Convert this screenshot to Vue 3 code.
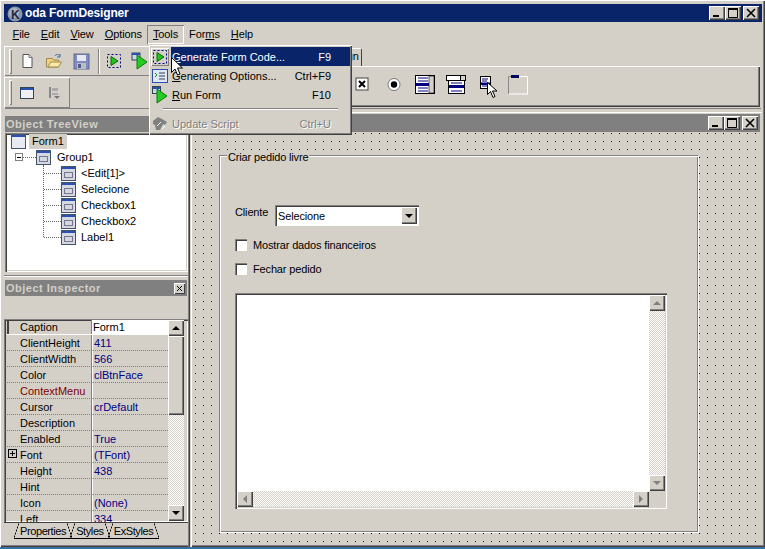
<script setup>
const menus = [
  { key: 'F', rest: 'ile' },
  { key: 'E', rest: 'dit' },
  { key: 'V', rest: 'iew' },
  { key: 'O', rest: 'ptions' },
  { key: 'T', rest: 'ools', open: true },
  { pre: 'For', key: 'm', rest: 's' },
  { key: 'H', rest: 'elp' }
]

const treeChildren = ['<Edit[1]>', 'Selecione', 'Checkbox1', 'Checkbox2', 'Label1']

const props = [
  { name: 'Caption', value: 'Form1', selected: true },
  { name: 'ClientHeight', value: '411' },
  { name: 'ClientWidth', value: '566' },
  { name: 'Color', value: 'clBtnFace' },
  { name: 'ContextMenu', value: '', event: true },
  { name: 'Cursor', value: 'crDefault' },
  { name: 'Description', value: '' },
  { name: 'Enabled', value: 'True' },
  { name: 'Font', value: '(TFont)', expand: true },
  { name: 'Height', value: '438' },
  { name: 'Hint', value: '' },
  { name: 'Icon', value: '(None)' },
  { name: 'Left', value: '334' }
]

const dots = "url(\"data:image/svg+xml,%3Csvg xmlns='http://www.w3.org/2000/svg' width='8' height='8'%3E%3Crect width='1' height='1' fill='%23000'/%3E%3C/svg%3E\")"
</script>

<template>
  <div class="desktop">
    <div class="window">
      <div class="titlebar">
        <svg class="app-icon" width="16" height="16" viewBox="0 0 16 16">
          <circle cx="8" cy="8" r="7.500" fill="#8a95a8" />
          <circle cx="7" cy="7" r="5" fill="#aab2c0" />
          <text x="4" y="12.500" font-size="12" font-weight="700" fill="#1c2a48" font-family="Liberation Sans, sans-serif">K</text>
        </svg>
        <span class="title-text">oda FormDesigner</span>
        <div class="win-btns">
          <span class="win-btn"><svg width="16" height="14" viewBox="0 0 16 14"><rect x="4" y="9" width="6" height="2" fill="#000" /></svg></span>
          <span class="win-btn"><svg width="16" height="14" viewBox="0 0 16 14"><path d="M3.500 2.500h9v9h-9z" fill="none" stroke="#000" /><rect x="3" y="2" width="10" height="2" fill="#000" /></svg></span>
          <span class="win-btn gap"><svg width="16" height="14" viewBox="0 0 16 14"><path d="M4 3l8 8M12 3l-8 8" stroke="#000" stroke-width="1.600" /></svg></span>
        </div>
      </div>

      <div class="menubar">
        <span v-for="m in menus" :key="m.key" class="menu-item" :class="{ open: m.open }">{{ m.pre }}<u>{{ m.key }}</u>{{ m.rest }}</span>
      </div>

      <div class="toolbars">
        <div class="toolbar-stack">
          <div class="toolbar first">
            <i class="grip"></i>
            <span class="tool">
              <svg width="18" height="18" viewBox="0 0 18 18"><path d="M5 2.500h6l3 3v10H5z" fill="#fff" stroke="#555" /><path d="M11 2.500v3h3" fill="#ddd" stroke="#777" /></svg>
            </span>
            <span class="tool">
              <svg width="18" height="18" viewBox="0 0 18 18"><path d="M1.500 6.500h6l1 1.500h5v7h-12z" fill="#f3d27a" stroke="#a08a50" /><path d="M3 15l2.500-5h11l-3 5z" fill="#fbe9a8" stroke="#a08a50" /><path d="M10 4c1-2 4-2 5 0" fill="none" stroke="#3a6ca8" /><path d="M15 2v3h-3" fill="none" stroke="#3a6ca8" /></svg>
            </span>
            <span class="tool">
              <svg width="18" height="18" viewBox="0 0 18 18"><rect x="2" y="2" width="15" height="15" fill="#7f8cc0" stroke="#606a98" /><rect x="5" y="3" width="9" height="6" fill="#e8e8ee" /><rect x="5" y="11" width="9" height="6" fill="#b8bcc8" /><rect x="6" y="12" width="3" height="4" fill="#555c80" /></svg>
            </span>
            <i class="sep"></i>
            <span class="tool narrow">
              <svg width="18" height="18" viewBox="0 0 18 18"><rect x="2.500" y="2.500" width="13" height="13" fill="none" stroke="#000080" stroke-dasharray="2 2" /><path d="M6 4.500l7 4.500-7 4.500z" fill="#1fc51f" stroke="#0a6a0a" /></svg>
            </span>
            <span class="tool narrow">
              <svg width="18" height="18" viewBox="0 0 18 18"><rect x="1" y="1" width="8" height="7" fill="#c8d4f0" stroke="#345" /><rect x="1" y="1" width="8" height="2" fill="#2a50b0" /><path d="M6 3l10 7-10 7z" fill="#22cc22" stroke="#0a7a0a" /></svg>
            </span>
          </div>
          <div class="toolbar second">
            <i class="grip"></i>
            <span class="tool">
              <svg width="18" height="18" viewBox="0 0 18 18"><rect x="2.500" y="3.500" width="13" height="11" fill="#eef0f6" stroke="#345" /><rect x="3" y="4" width="12" height="2" fill="#2a50b0" /></svg>
            </span>
            <span class="tool">
              <svg width="18" height="18" viewBox="0 0 18 18"><path d="M5 3v11" stroke="#888" stroke-width="2" /><path d="M7 4h6v3H7zM7 9h6v2H7z" fill="#aaa" /><path d="M9 12h6l-3 3z" fill="#777" /></svg>
            </span>
          </div>
        </div>

        <div class="palette">
          <div class="palette-tabs"><span class="palette-tab">Design</span></div>
          <div class="palette-panel">
            <span class="pal">
              <svg width="18" height="18" viewBox="0 0 18 18"><rect x="2" y="2" width="12" height="12" fill="#fff" stroke="#444" /><path d="M5 5l6 6M11 5l-6 6" stroke="#000" stroke-width="2" /></svg>
            </span>
            <span class="pal">
              <svg width="18" height="18" viewBox="0 0 18 18"><circle cx="9" cy="8.500" r="6" fill="#fff" stroke="#777" /><circle cx="9" cy="8.500" r="3.200" fill="#000" /></svg>
            </span>
            <span class="pal">
              <svg width="20" height="20" viewBox="0 0 20 20"><rect x=".5" y=".5" width="19" height="18" fill="#fff" stroke="#000" /><path d="M3 3h10M3 6h10M3 13h10M3 16h10" stroke="#000080" /><rect x="1" y="8" width="13" height="3" fill="#000080" /><rect x="14" y="1" width="5" height="17" fill="#d4d0c8" stroke="#000" stroke-width=".6" /></svg>
            </span>
            <span class="pal">
              <svg width="20" height="20" viewBox="0 0 20 20"><rect x=".5" y=".5" width="19" height="5" fill="#fff" stroke="#000" /><rect x="14.500" y=".5" width="5" height="5" fill="#d4d0c8" stroke="#000" /><rect x="2.500" y="5.500" width="16" height="13" fill="#fff" stroke="#000" /><path d="M5 8h11M5 16h11" stroke="#000080" /><rect x="3" y="10" width="15" height="3" fill="#000080" /></svg>
            </span>
            <span class="pal">
              <svg width="14" height="18" viewBox="0 0 14 18"><rect x=".5" y=".5" width="10" height="12" fill="#fff" stroke="#000" /><path d="M2 3h6M2 5h5M2 10h6" stroke="#000080" /><rect x="1" y="6.500" width="9" height="2.500" fill="#000080" /></svg>
            </span>
            <span class="pal">
              <svg width="20" height="20" viewBox="0 0 20 20"><path d="M.5 19V1.500h19V19z" fill="#d4d0c8" stroke="#fff" /><path d="M.5 19V1.500h3" fill="none" stroke="#888" /><rect x="3" y="0" width="8" height="3" fill="#000060" /></svg>
            </span>
          </div>
        </div>
      </div>

      <div class="workspace">
        <aside class="side">
          <div class="panel tree-panel">
            <div class="caption">Object TreeView</div>
            <div class="tree sunken">
              <div class="tree-row root">
                <svg class="node" width="15" height="15" viewBox="0 0 15 15"><rect x=".5" y=".5" width="14" height="14" fill="#e8eaf2" stroke="#456" /><rect x="1" y="1" width="13" height="2" fill="#2a50b0" /></svg>
                <span class="tree-label selected">Form1</span>
              </div>
              <div class="tree-row group-row">
                <span class="expander"></span>
                <i class="dash"></i>
                <svg class="node" width="15" height="15" viewBox="0 0 15 15"><rect x=".5" y=".5" width="14" height="14" fill="#d4d8e4" stroke="#456" /><rect x="1" y="1" width="13" height="2" fill="#2a50b0" /><rect x="3.500" y="6.500" width="8" height="5" fill="none" stroke="#778" /></svg>
                <span class="tree-label">Group1</span>
              </div>
              <div class="tree-children">
                <div v-for="c in treeChildren" :key="c" class="tree-row">
                  <i class="dash long"></i>
                  <svg class="node" width="15" height="15" viewBox="0 0 15 15"><rect x=".5" y=".5" width="14" height="14" fill="#d4d8e4" stroke="#456" /><rect x="1" y="1" width="13" height="2" fill="#2a50b0" /><rect x="3.500" y="6.500" width="8" height="5" fill="none" stroke="#778" /></svg>
                  <span class="tree-label">{{ c }}</span>
                </div>
              </div>
            </div>
          </div>

          <div class="panel inspector">
            <div class="caption">Object Inspector<span class="cap-close"><svg width="11" height="11" viewBox="0 0 11 11"><path d="M3 3l5 5M8 3l-5 5" stroke="#000" /></svg></span></div>
            <div class="grid-wrap sunken">
              <div class="prop-list">
                <div v-for="p in props" :key="p.name" class="prop" :class="{ selected: p.selected }">
                  <span class="prop-name" :class="{ event: p.event }">
                    <span v-if="p.expand" class="plus"></span>{{ p.name }}
                  </span>
                  <span class="prop-value">{{ p.value }}</span>
                </div>
              </div>
              <div class="vscroll">
                <span class="sb-btn"><i class="arrow up"></i></span>
                <span class="thumb"></span>
                <span class="track"></span>
                <span class="sb-btn"><i class="arrow down"></i></span>
              </div>
            </div>
            <div class="tabs">
              <span class="tab active">Properties</span>
              <span class="tab">Styles</span>
              <span class="tab">ExStyles</span>
            </div>
          </div>
        </aside>

        <main class="mdi">
          <div class="mdi-caption">
            <div class="win-btns">
              <span class="win-btn"><svg width="16" height="14" viewBox="0 0 16 14"><rect x="4" y="9" width="6" height="2" fill="#000" /></svg></span>
              <span class="win-btn"><svg width="16" height="14" viewBox="0 0 16 14"><path d="M3.500 2.500h9v9h-9z" fill="none" stroke="#000" /><rect x="3" y="2" width="10" height="2" fill="#000" /></svg></span>
              <span class="win-btn gap"><svg width="16" height="14" viewBox="0 0 16 14"><path d="M4 3l8 8M12 3l-8 8" stroke="#000" stroke-width="1.600" /></svg></span>
            </div>
          </div>
          <div class="canvas" :style="{ backgroundImage: dots }">
            <div class="groupbox">
              <span class="group-title">Criar pedido livre</span>
              <div class="client-row">
                <label class="client-label">Cliente</label>
                <div class="combo">
                  <span>Selecione</span>
                  <span class="sb-btn combo-btn"><i class="arrow down"></i></span>
                </div>
              </div>
              <div class="check-row"><span class="check"></span>Mostrar dados financeiros</div>
              <div class="check-row"><span class="check"></span>Fechar pedido</div>
              <div class="memo">
                <div class="memo-text"></div>
                <div class="memo-v">
                  <span class="sb-btn"><i class="arrow up off"></i></span>
                  <span class="track"></span>
                  <span class="sb-btn"><i class="arrow down off"></i></span>
                </div>
                <div class="memo-h">
                  <span class="sb-btn"><i class="arrow left off"></i></span>
                  <span class="track"></span>
                  <span class="sb-btn"><i class="arrow right off"></i></span>
                </div>
                <div class="memo-corner"></div>
              </div>
            </div>
          </div>
        </main>
      </div>

      <!-- open Tools menu -->
      <div class="popup">
        <div class="pop-row active">
          <span class="pop-icon raised">
            <svg width="16" height="16" viewBox="0 0 16 16"><rect x="1.500" y="1.500" width="13" height="13" fill="none" stroke="#000080" stroke-dasharray="2 2" /><path d="M5 3.500l7 4.500-7 4.500z" fill="#1fc51f" stroke="#0a6a0a" /></svg>
          </span>
          <span class="pop-label"><u>G</u>enerate Form Code...<em>F9</em></span>
        </div>
        <div class="pop-row">
          <span class="pop-icon">
            <svg width="16" height="14" viewBox="0 0 16 14"><rect x=".5" y=".5" width="15" height="13" fill="#dfe6f6" stroke="#2a50b0" /><path d="M3 4l2 2-2 2" fill="none" stroke="#1a8a1a" /><path d="M7 4h6M7 7h6M7 10h6" stroke="#345" /></svg>
          </span>
          <span class="pop-label"><u>G</u>enerating Options...<em>Ctrl+F9</em></span>
        </div>
        <div class="pop-row">
          <span class="pop-icon">
            <svg width="16" height="18" viewBox="0 0 16 18"><rect x=".5" y=".5" width="8" height="7" fill="#c8d4f0" stroke="#345" /><rect x="1" y="1" width="7" height="2" fill="#2a50b0" /><path d="M5 3l10 7-10 7z" fill="#22cc22" stroke="#0a7a0a" /></svg>
          </span>
          <span class="pop-label"><u>R</u>un Form<em>F10</em></span>
        </div>
        <div class="pop-sep"></div>
        <div class="pop-row disabled">
          <span class="pop-icon">
            <svg width="16" height="16" viewBox="0 0 16 16"><path d="M1 5l5-4 4 2 5 3-2 3-2-1-3 6H4L3 9 1 8z" fill="#808080" /><path d="M5 10l4-4M10 13l3-3" stroke="#fff" /></svg>
          </span>
          <span class="pop-label">Update Script<em>Ctrl+U</em></span>
        </div>
      </div>

      <svg class="cursor menu-cursor" width="12" height="20" viewBox="0 0 12 20"><path d="M.5.500v15l3.500-3.500 2.500 6 2.500-1-2.500-6h5z" fill="#fff" stroke="#000" /></svg>
      <svg class="cursor pal-cursor" width="12" height="20" viewBox="0 0 12 20"><path d="M.5.500v12l3-3 2.500 6 2-1-2.500-5.500h4.500z" fill="#fff" stroke="#000" /></svg>
    </div>
  </div>
</template>

<style>
html, body { margin: 0; padding: 0; background: #3a6ea5; }
</style>

<style scoped>
* { box-sizing: border-box; }

.desktop {
  width: 765px;
  height: 549px;
  overflow: hidden;
  background: #3a6ea5;
  font-family: "Liberation Sans", sans-serif;
  font-size: 11px;
  color: #000;
}

.window {
  position: relative;
  height: 547px;
  padding: 4px 3px 0 4px;
  background: #d4d0c8;
  box-shadow: inset 1px 1px #fff, inset -1px -1px #404040, inset -2px -2px #808080;
  display: flex;
  flex-direction: column;
}

.titlebar {
  height: 18px;
  background: #0a246a;
  display: flex;
  align-items: center;
  padding: 0 3px 0 3px;
  flex: none;
}

.app-icon { margin-top: 1px; }

.title-text {
  margin-left: 2px;
  color: #fff;
  font-size: 12px;
  font-weight: 700;
  letter-spacing: -.15px;
}

.win-btns { margin-left: auto; display: flex; }

.win-btn {
  width: 16px;
  height: 14px;
  background: #d4d0c8;
  box-shadow: inset 1px 1px #fff, inset -1px -1px #404040, inset -2px -2px #808080;
  display: block;
}

.win-btn svg { display: block; }
.win-btn.gap { margin-left: 2px; }

.menubar {
  height: 24px;
  display: flex;
  align-items: center;
  padding: 1px 0 0 3px;
  flex: none;
}

.menu-item {
  padding: 0 5.5px;
  height: 19px;
  line-height: 19px;
  letter-spacing: -.1px;
}

.menu-item.open {
  box-shadow: inset 1px 1px #808080, inset -1px -1px #fff;
}

.toolbars {
  height: 62px;
  flex: none;
  display: flex;
  box-shadow: 0 2px 0 -1px #808080;
}

.toolbar-stack { width: 161px; flex: none; }

.toolbar {
  display: flex;
  align-items: center;
  padding-left: 5px;
  box-shadow: inset 1px 1px #fff, inset -1px -1px #808080;
}

.toolbar.first { height: 30px; width: 161px; }
.toolbar.second { height: 31px; width: 66px; margin-top: 1px; }

.grip {
  width: 3px;
  height: 25px;
  margin-right: 1px;
  box-shadow: inset 1px 1px #fff, inset -1px -1px #808080;
  flex: none;
}

.tool {
  width: 27px;
  height: 24px;
  display: flex;
  align-items: center;
  justify-content: center;
  flex: none;
}

.tool.narrow { width: 26px; }

.sep {
  width: 2px;
  height: 25px;
  margin: 0 1px 0 4px;
  box-shadow: inset 1px 0 #808080, inset -1px 0 #fff;
  flex: none;
}

.palette { flex: 1; display: flex; flex-direction: column; margin-right: 2px; }

.palette-tabs { height: 20px; display: flex; padding: 2px 0 0 140px; }

.palette-tab {
  width: 57px;
  height: 18px;
  line-height: 16px;
  text-align: right;
  padding-right: 3px;
  border-radius: 2px 2px 0 0;
  box-shadow: inset 1px 1px #fff, inset -1px 0 #404040;
}

.palette-panel {
  height: 41px;
  display: flex;
  align-items: center;
  padding: 0 0 3px 182px;
  box-shadow: inset 1px 1px #fff, inset -1px -1px #404040, inset -2px -2px #808080;
}

.pal {
  width: 31px;
  height: 24px;
  display: flex;
  align-items: center;
  justify-content: center;
  flex: none;
}

.workspace {
  flex: 1;
  min-height: 0;
  display: flex;
  margin-top: 4px;
}

.side {
  width: 184px;
  flex: none;
  display: flex;
  flex-direction: column;
  padding-top: 4px;
  box-shadow: 1px 0 0 #808080, 2px 0 0 #404040, 3px 0 0 #d4d0c8;
}

.panel { display: flex; flex-direction: column; }
.tree-panel { height: 160px; border-bottom: 1px solid #808080; box-shadow: 0 1px 0 #fff; }
.inspector { flex: 1; margin-top: 4px; min-height: 0; }

.caption {
  height: 16px;
  flex: none;
  margin: 0 1px 0 1px;
  background: #808080;
  color: #d4d0c8;
  font-weight: 700;
  font-size: 11px;
  letter-spacing: .5px;
  line-height: 16px;
  padding-left: 1px;
  display: flex;
  align-items: center;
}

.cap-close {
  width: 11px;
  height: 11px;
  margin-left: auto;
  margin-right: 2px;
  background: #d4d0c8;
  box-shadow: inset 1px 1px #fff, inset -1px -1px #404040;
}

.cap-close svg { display: block; }

.sunken {
  box-shadow: inset 1px 1px #808080, inset 2px 2px #404040, inset -1px -1px #fff, inset -2px -2px #d4d0c8;
}

.tree {
  height: 139px;
  margin: 1px 0 0 1px;
  background: #fff;
  padding: 0 0 0 6px;
}

.tree-row {
  height: 16px;
  display: flex;
  align-items: center;
}

.node { flex: none; }

.tree-label { margin-left: 4px; padding: 0 2px; line-height: 15px; }
.tree-children .tree-label { margin-left: 3px; padding: 0 2px; }
.tree-label.selected { background: #d4d0c8; margin-left: 3px; padding: 0 3px; }

.group-row { padding-left: 4px; }

.expander {
  width: 8px;
  height: 8px;
  border: 1px solid #808080;
  background: linear-gradient(#000, #000) center / 4px 1px no-repeat #fff;
  flex: none;
}

.dash {
  width: 13px;
  border-bottom: 1px dotted #666;
  flex: none;
}

.dash.long { width: 17px; }

.tree-children {
  margin-left: 32px;
  height: 72px;
  border-left: 1px dotted #666;
}

.inspector .sunken { height: 203px; margin-top: 23px; }

.grid-wrap {
  display: flex;
  padding: 1px 2px 0 3px;
  overflow: hidden;
  flex: none;
}

.prop-list { width: 161px; flex: none; height: 202px; overflow: hidden; }

.prop {
  height: 16px;
  display: flex;
  border-bottom: 1px dotted #808080;
  line-height: 16px;
}

.prop-name {
  width: 84px;
  padding-left: 13px;
  position: relative;
  flex: none;
  box-shadow: 1px 0 0 #808080, 2px 0 0 #fff;
}

.prop-name.event { color: #800000; }

.prop-value {
  padding-left: 1px;
  margin-left: 2px;
  color: #000080;
  flex: 1;
}

.prop.selected { height: 15px; line-height: 14px; border-bottom: 1px solid #fff; }
.prop.selected .prop-name { box-shadow: inset 2px 0 #404040, 1px 0 0 #808080, 2px 0 0 #fff; }
.prop.selected .prop-value { background: #fff; color: #000; padding-left: 0; }

.plus {
  position: absolute;
  left: 1px;
  top: 2px;
  width: 9px;
  height: 9px;
  border: 1px solid #000;
  background:
    linear-gradient(#000, #000) center / 5px 1px no-repeat,
    linear-gradient(#000, #000) center / 1px 5px no-repeat;
}

.vscroll {
  width: 16px;
  flex: none;
  display: flex;
  flex-direction: column;
  height: 201px;
}

.sb-btn {
  width: 16px;
  height: 16px;
  flex: none;
  background: #d4d0c8;
  box-shadow: inset 1px 1px #fff, inset -1px -1px #404040, inset -2px -2px #808080;
  display: flex;
  align-items: center;
  justify-content: center;
}

.thumb {
  height: 79px;
  flex: none;
  background: #d4d0c8;
  box-shadow: inset 1px 1px #fff, inset -1px -1px #404040, inset -2px -2px #808080;
}

.track {
  flex: 1;
  background: repeating-conic-gradient(#d4d0c8 0 25%, #fff 0 50%) 0 0 / 2px 2px;
}

.arrow { width: 0; height: 0; border: 4px solid transparent; display: block; }
.arrow.up { border-bottom-color: #000; border-top-width: 0; }
.arrow.down { border-top-color: #000; border-bottom-width: 0; }
.arrow.left { border-right-color: #000; border-left-width: 0; }
.arrow.right { border-left-color: #000; border-right-width: 0; }
.arrow.up.off { border-bottom-color: #808080; }
.arrow.down.off { border-top-color: #808080; }
.arrow.left.off { border-right-color: #808080; }
.arrow.right.off { border-left-color: #808080; }

.tabs {
  height: 17px;
  display: flex;
  padding-left: 10px;
  border-top: 1px solid #404040;
  flex: none;
}

.tab {
  height: 16px;
  padding: 0 6px;
  line-height: 17px;
  letter-spacing: -.4px;
  margin-right: -2px;
  border-bottom: 1px solid #000;
  background:
    linear-gradient(to top right, transparent calc(50% - .6px), #000 50%, transparent calc(50% + .6px)) right / 5px 100% no-repeat,
    linear-gradient(to top left, transparent calc(50% - .6px), #000 50%, transparent calc(50% + .6px)) left / 5px 100% no-repeat;
}

.mdi {
  flex: 1;
  min-width: 0;
  margin-left: 3px;
  display: flex;
  flex-direction: column;
  box-shadow: inset 1px 1px #fff;
  padding: 2px 2px 2px 1px;
}

.mdi-caption {
  height: 18px;
  flex: none;
  background: #808080;
  display: flex;
  align-items: center;
  padding-right: 2px;
}

.canvas {
  flex: 1;
  min-height: 0;
  background-color: #d4d0c8;
  background-position: 3px 1px;
  padding: 23px 0 0 27px;
}

.groupbox {
  position: relative;
  width: 479px;
  height: 377px;
  padding: 50px 16px 0;
  letter-spacing: -.15px;
  box-shadow: inset 1px 1px #808080, inset 2px 2px #fff, 1px 1px #fff, inset -1px -1px #808080;
  background: #d4d0c8;
}

.group-title {
  position: absolute;
  left: 8px;
  top: -5px;
  padding: 0 1px;
  background: #d4d0c8;
  line-height: 14px;
}

.client-row { display: flex; align-items: center; height: 21px; margin-bottom: 13px; }
.client-label { width: 40px; margin-top: -8px; }

.combo {
  width: 144px;
  height: 21px;
  background: #fff;
  display: flex;
  align-items: center;
  justify-content: space-between;
  padding: 0 2px 0 3px;
  box-shadow: inset 1px 1px #808080, inset 2px 2px #404040, inset -1px -1px #fff;
}

.combo-btn { height: 17px; }

.check-row {
  height: 12px;
  display: flex;
  align-items: center;
  margin-bottom: 12px;
}

.check {
  width: 12px;
  height: 12px;
  margin-right: 6px;
  background: #fff;
  box-shadow: inset 1px 1px #808080, inset 2px 2px #404040, inset -1px -1px #fff;
  flex: none;
}

.memo {
  width: 432px;
  height: 216px;
  margin-top: 18px;
  padding: 2px;
  display: grid;
  grid-template-columns: 1fr 16px;
  grid-template-rows: 1fr 16px;
  background: #d4d0c8;
  box-shadow: inset 1px 1px #808080, inset 2px 2px #404040, inset -1px -1px #fff;
}

.memo-text { background: #fff; }
.memo-v { display: flex; flex-direction: column; }
.memo-h { display: flex; }

.popup {
  position: absolute;
  left: 149px;
  top: 45px;
  width: 203px;
  height: 90px;
  padding: 2px;
  background: #d4d0c8;
  box-shadow: inset 1px 1px #fff, inset -1px -1px #404040, inset -2px -2px #808080;
  z-index: 5;
}

.pop-row { height: 19px; display: flex; align-items: center; }

.pop-icon {
  width: 18px;
  height: 18px;
  margin-right: 2px;
  display: flex;
  align-items: center;
  justify-content: center;
  flex: none;
}

.pop-icon.raised { box-shadow: inset 1px 1px #fff, inset -1px -1px #808080; }

.pop-label {
  flex: 1;
  height: 19px;
  line-height: 21px;
  display: flex;
  padding: 0 19px 0 1px;
}

.pop-label em { margin-left: auto; font-style: normal; }
.pop-row.active .pop-label { background: #0a246a; color: #fff; }

.pop-sep {
  height: 2px;
  margin: 4px 12px;
  box-shadow: inset 0 1px #808080, inset 0 -1px #fff;
}

.pop-row.disabled .pop-label { color: #808080; text-shadow: 1px 1px #fff; }

.cursor { position: absolute; z-index: 6; }
.menu-cursor { left: 171px; top: 57px; }
.pal-cursor { left: 487px; top: 82px; }
</style>
